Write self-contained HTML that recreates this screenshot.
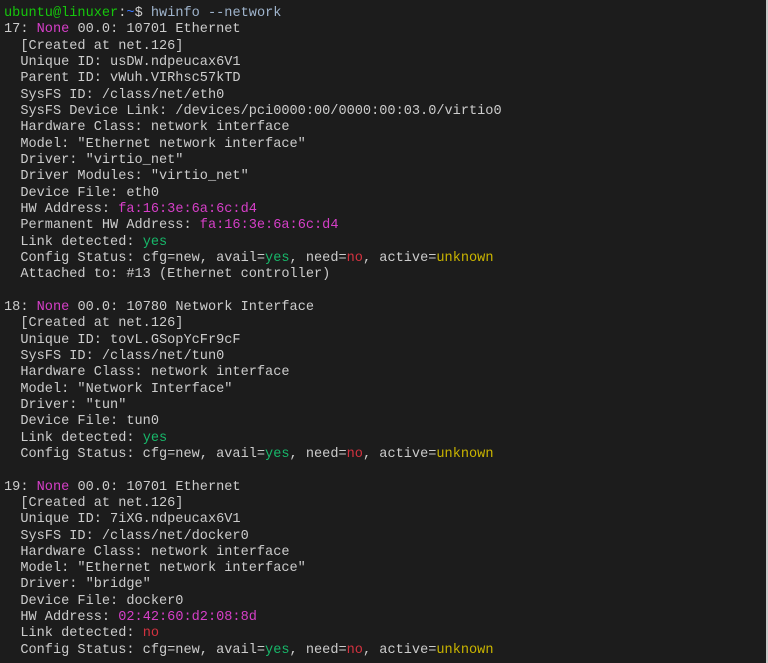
<!DOCTYPE html>
<html><head><meta charset="utf-8"><style>
html,body{margin:0;padding:0;background:#1c1c1c;}
body{width:768px;height:663px;overflow:hidden;position:relative;}
pre{margin:0;position:absolute;left:4px;top:6px;font-family:"Liberation Mono","DejaVu Sans Mono",monospace;font-size:13.6px;line-height:16.33px;color:#cccccc;}
.edge{position:absolute;right:0;top:0;width:2px;height:663px;background:#c8c8c8;}
.g{color:#16c60c}.b{color:#3b78ff}.c{color:#9fb4cc}.m{color:#d63fc8}.y{color:#c9b400}.r{color:#d2323f}.gr{color:#17b86a}
</style></head><body>
<pre><span class="g">ubuntu@linuxer</span>:<span class="b">~</span>$ <span class="c">hwinfo --network</span>
17: <span class="m">None</span> 00.0: 10701 Ethernet
  [Created at net.126]
  Unique ID: usDW.ndpeucax6V1
  Parent ID: vWuh.VIRhsc57kTD
  SysFS ID: /class/net/eth0
  SysFS Device Link: /devices/pci0000:00/0000:00:03.0/virtio0
  Hardware Class: network interface
  Model: "Ethernet network interface"
  Driver: "virtio_net"
  Driver Modules: "virtio_net"
  Device File: eth0
  HW Address: <span class="m">fa:16:3e:6a:6c:d4</span>
  Permanent HW Address: <span class="m">fa:16:3e:6a:6c:d4</span>
  Link detected: <span class="gr">yes</span>
  Config Status: cfg=new, avail=<span class="gr">yes</span>, need=<span class="r">no</span>, active=<span class="y">unknown</span>
  Attached to: #13 (Ethernet controller)

18: <span class="m">None</span> 00.0: 10780 Network Interface
  [Created at net.126]
  Unique ID: tovL.GSopYcFr9cF
  SysFS ID: /class/net/tun0
  Hardware Class: network interface
  Model: "Network Interface"
  Driver: "tun"
  Device File: tun0
  Link detected: <span class="gr">yes</span>
  Config Status: cfg=new, avail=<span class="gr">yes</span>, need=<span class="r">no</span>, active=<span class="y">unknown</span>

19: <span class="m">None</span> 00.0: 10701 Ethernet
  [Created at net.126]
  Unique ID: 7iXG.ndpeucax6V1
  SysFS ID: /class/net/docker0
  Hardware Class: network interface
  Model: "Ethernet network interface"
  Driver: "bridge"
  Device File: docker0
  HW Address: <span class="m">02:42:60:d2:08:8d</span>
  Link detected: <span class="r">no</span>
  Config Status: cfg=new, avail=<span class="gr">yes</span>, need=<span class="r">no</span>, active=<span class="y">unknown</span></pre>
<div class="edge"></div>
</body></html>
